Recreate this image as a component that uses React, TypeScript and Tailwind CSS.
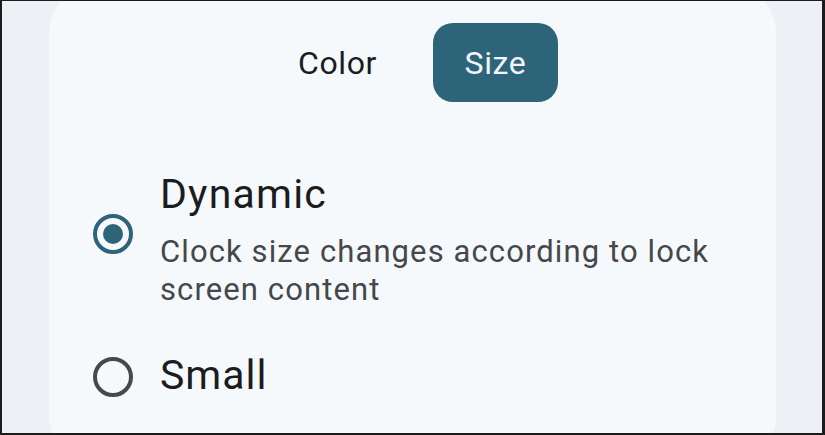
import React from "react";

function Radio({ checked }: { checked: boolean }) {
  const c = checked ? "#2d6479" : "#47494c";
  return (
    <svg width="40" height="40" viewBox="0 0 40 40" className="shrink-0">
      <circle cx="20" cy="20" r="18" fill="none" stroke={c} strokeWidth="4" />
      {checked && <circle cx="20" cy="20" r="10" fill={c} />}
    </svg>
  );
}

export default function App() {
  return (
    <div
      className="w-[825px] h-[435px] overflow-hidden bg-[#edf1f5] border-solid border-[#1c1c1c] border-t-[1px] border-l-[2px] border-r-[3px] border-b-[2px] pl-[47px] pr-[46px]"
      style={{ fontFamily: "Roboto, 'Open Sans', sans-serif" }}
    >
      <div className="mt-[-16px] h-[480px] rounded-[48px] bg-[#f5f9fc] pt-[38px] pl-[44px]">
        <div className="flex justify-center gap-[33px] pl-[8px] pr-[44px]">
          <div className="w-[125px] h-[79px] rounded-[20px] flex items-center justify-center text-[32px] tracking-[0.6px] text-[#1a1c1e]">
            Color
          </div>
          <div className="w-[125px] h-[79px] rounded-[20px] bg-[#2d6479] flex items-center justify-center text-[32px] tracking-[0.6px] text-[#f2f6fa]">
            Size
          </div>
        </div>

        <div className="mt-[68px] flex flex-col">
          <div className="flex items-start gap-[27px]">
            <div className="mt-[44px]">
              <Radio checked />
            </div>
            <div className="flex flex-col">
              <div className="text-[41px] leading-[48px] tracking-[1.2px] text-[#1b1c1e]">Dynamic</div>
              <div className="mt-[15px] text-[31px] leading-[38px] tracking-[1.1px] text-[#45474a]">
                Clock size changes according to lock
                <br />
                screen content
              </div>
            </div>
          </div>

          <div className="mt-[42px] flex items-start gap-[27px]">
            <div className="mt-[6px]">
              <Radio checked={false} />
            </div>
            <div className="text-[41px] leading-[48px] tracking-[1px] text-[#1b1c1e]">Small</div>
          </div>
        </div>
      </div>
    </div>
  );
}
